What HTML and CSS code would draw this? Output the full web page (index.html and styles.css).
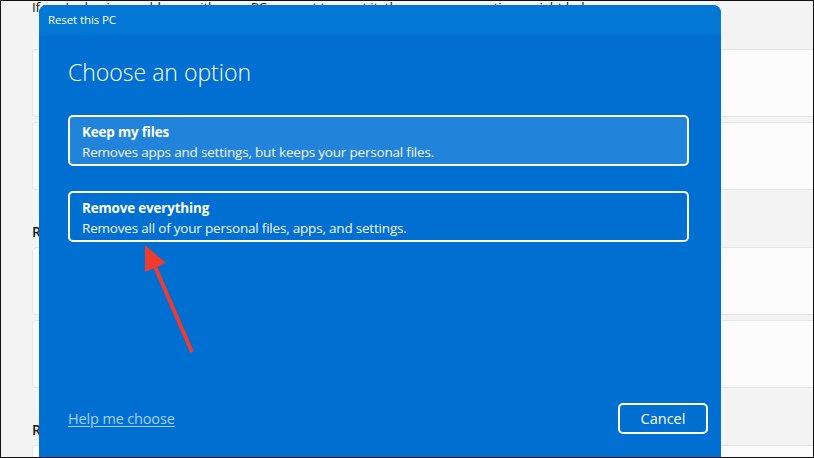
FILE: index.html
```html
<!DOCTYPE html>
<html lang="en">
<head>
    <meta charset="UTF-8">
    <meta name="viewport" content="width=device-width, initial-scale=1.0">
    <title>Recovery</title>
    <link rel="stylesheet" href="styles.css">
</head>
<body>
    <div class="screen">
        <!-- Settings page behind the dialog -->
        <main class="settings">
            <p class="intro">If you're having problems with your PC or want to reset it, these recovery options might help.</p>
            <div class="card"></div>
            <div class="card"></div>
            <h3 class="section">Recovery options</h3>
            <div class="card"></div>
            <div class="card"></div>
            <h3 class="section">Related support</h3>
            <div class="card"></div>
        </main>

        <!-- Reset dialog -->
        <div class="dialog">
            <div class="dialog-title">Reset this PC</div>
            <div class="dialog-body">
                <h1 class="dialog-heading">Choose an option</h1>
                <div class="option option-hover">
                    <div class="option-name">Keep my files</div>
                    <div class="option-desc">Removes apps and settings, but keeps your personal files.</div>
                </div>
                <div class="option">
                    <div class="option-name">Remove everything</div>
                    <div class="option-desc">Removes all of your personal files, apps, and settings.</div>
                </div>
                <div class="dialog-footer">
                    <a class="help-link" href="#">Help me choose</a>
                    <button class="button">Cancel</button>
                </div>
            </div>
        </div>

        <!-- annotation arrow -->
        <svg class="arrow" width="814" height="458" viewBox="0 0 814 458">
            <line x1="192" y1="352" x2="153" y2="262" stroke="#ef3b30" stroke-width="4" />
            <polygon points="145,245 145,272 166,263" fill="#ef3b30" />
        </svg>
    </div>
</body>
</html>
```

FILE: styles.css
```css
body {
    margin: 0;
    font-family: "Open Sans", "Noto Sans", sans-serif;
}
.screen {
    position: relative;
    width: 814px;
    height: 458px;
    box-sizing: border-box;
    border: 1px solid #111;
    background: #f3f3f3;
    overflow: hidden;
}
.settings {
    width: 820px;
    padding-left: 31px;
}
.intro {
    margin: -4px 0 0;
    font-size: 13.5px;
    letter-spacing: -0.2px;
    line-height: 20px;
    color: #1b1b1b;
    white-space: nowrap;
}
.card {
    height: 68px;
    box-sizing: border-box;
    margin-top: 5px;
    background: #fbfbfb;
    border: 1px solid #e5e5e5;
    border-radius: 4px;
}
.intro + .card {
    margin-top: 32px;
}
.section {
    margin: 32px 0 2px;
    font-size: 14px;
    line-height: 20px;
    font-weight: 600;
    color: #1b1b1b;
}
.dialog {
    position: absolute;
    left: 38px;
    top: 4px;
    width: 682px;
    height: 480px;
    background: #006fd2;
    border-radius: 8px 8px 0 0;
    overflow: hidden;
    color: #fff;
}
.dialog-title {
    height: 30px;
    line-height: 30px;
    padding-left: 9px;
    font-size: 11.5px;
    letter-spacing: -0.1px;
    background: #0377d4;
}
.dialog-body {
    padding: 0 32px 0 29px;
}
.dialog-heading {
    margin: 0;
    padding-top: 21px;
    font-size: 23px;
    line-height: 32px;
    font-weight: 300;
}
.option {
    height: 51px;
    box-sizing: border-box;
    margin-top: 25px;
    padding: 5px 12px 0;
    border: 2px solid #fff;
    border-radius: 5px;
    font-size: 13.5px;
    letter-spacing: -0.2px;
    line-height: 20px;
}
.dialog-heading + .option {
    margin-top: 27px;
}
.option-hover {
    background: #2283db;
}
.option-name {
    font-weight: 700;
}
.option-desc {
    color: #f2f7fd;
}
.dialog-footer {
    display: flex;
    justify-content: space-between;
    align-items: center;
    margin-top: 161px;
    margin-right: -19px;
}
.help-link {
    font-size: 14.5px;
    letter-spacing: -0.15px;
    color: #a8d0f6;
    text-decoration: underline;
    text-underline-offset: 2px;
}
.button {
    width: 90px;
    height: 31px;
    padding: 0;
    background: transparent;
    color: #fff;
    border: 2px solid #fff;
    border-radius: 5px;
    font-family: inherit;
    font-size: 14.5px;
}
.arrow {
    position: absolute;
    left: -1px;
    top: -1px;
}
```
